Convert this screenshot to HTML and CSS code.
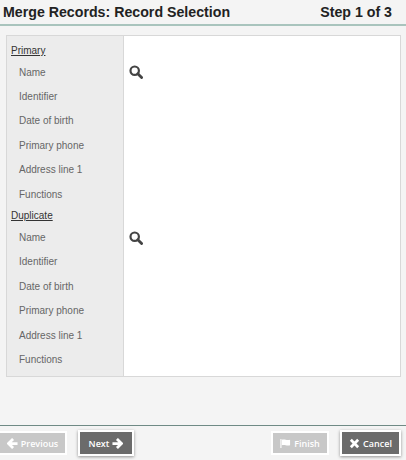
FILE: index.html
```html
<!DOCTYPE html>
<html lang="en">
<head>
  <meta charset="UTF-8" />
  <title>Merge Records</title>
  <link rel="stylesheet" href="styles.css">
</head>
<body>
  <div class="header">
    <h1>Merge Records: Record Selection</h1>
    <div class="step">Step 1 of 3</div>
  </div>

  <div class="panel">
    <div class="labels">
      <div class="group">Primary</div>
      <div class="row">Name</div>
      <div class="row">Identifier</div>
      <div class="row">Date of birth</div>
      <div class="row">Primary phone</div>
      <div class="row">Address line 1</div>
      <div class="row">Functions</div>
      <div class="group second">Duplicate</div>
      <div class="row">Name</div>
      <div class="row">Identifier</div>
      <div class="row">Date of birth</div>
      <div class="row">Primary phone</div>
      <div class="row">Address line 1</div>
      <div class="row">Functions</div>
    </div>
    <div class="values">
      <div class="group"></div>
      <div class="row">
        <svg class="search" viewBox="0 0 14 14"><circle cx="5.7" cy="5.7" r="4.2" fill="none" stroke="#444" stroke-width="2.2"/><path d="M8.8 8.8l3.8 3.8" stroke="#444" stroke-width="2.8" stroke-linecap="round"/></svg>
      </div>
      <div class="row"></div>
      <div class="row"></div>
      <div class="row"></div>
      <div class="row"></div>
      <div class="row"></div>
      <div class="group second"></div>
      <div class="row">
        <svg class="search" viewBox="0 0 14 14"><circle cx="5.7" cy="5.7" r="4.2" fill="none" stroke="#444" stroke-width="2.2"/><path d="M8.8 8.8l3.8 3.8" stroke="#444" stroke-width="2.8" stroke-linecap="round"/></svg>
      </div>
    </div>
  </div>

  <div class="footer">
    <div class="btn-group">
      <button class="btn disabled previous">
        <svg class="icon" viewBox="0 0 12 12"><path d="M6.600 1L1.600 6l5 5M2 6h9.500" fill="none" stroke="#fff" stroke-width="3"/></svg>
        Previous
      </button>
      <button class="btn next">
        Next
        <svg class="icon" viewBox="0 0 12 12"><path d="M5.400 1l5 5-5 5M10 6H.5" fill="none" stroke="#fff" stroke-width="3"/></svg>
      </button>
    </div>
    <div class="btn-group">
      <button class="btn disabled finish">
        <svg class="icon" viewBox="0 0 12 12"><path d="M1 1v10" stroke="#fff" stroke-width="1.2"/><path d="M2 2c3-1.2 5 1 9 0v6c-4 1-6-1.200-9 0z" fill="#fff"/></svg>
        Finish
      </button>
      <button class="btn cancel">
        <svg class="icon" viewBox="0 0 12 12"><path d="M2 2l8 8M10 2l-8 8" stroke="#fff" stroke-width="3"/></svg>
        Cancel
      </button>
    </div>
  </div>
</body>
</html>
```

FILE: styles.css
```css
* {
  box-sizing: border-box;
}
html, body {
  height: 100%;
}
body {
  margin: 0;
  background: #f4f4f4;
  color: #333;
  font-family: "Liberation Sans", Arial, sans-serif;
  font-size: 10px;
  display: flex;
  flex-direction: column;
  overflow: hidden;
}
.header {
  height: 26px;
  padding: 0 14px 0 3px;
  display: flex;
  justify-content: space-between;
  align-items: center;
  border-bottom: 2px solid #a9c4bd;
  color: #222;
  font-size: 14.2px;
  font-weight: bold;
}
h1 {
  margin: 0;
  font-size: 14.2px;
}
.panel {
  margin: 9px 5px 0 6px;
  height: 342px;
  display: flex;
  background: #fff;
  border: 1px solid #d8d8d8;
}
.labels {
  width: 117px;
  background: #ececec;
  border-right: 1px solid #d8d8d8;
  color: #666;
}
.values {
  flex: 1;
}
.group {
  height: 13px;
  margin: 8px 0 3px;
  padding-left: 4px;
  line-height: 13px;
  color: #333;
  text-decoration: underline;
}
.group.second {
  margin: 3px 0 3px;
}
.row {
  height: 24.4px;
  padding-left: 12px;
  display: flex;
  align-items: center;
}
.values .row {
  padding-left: 5px;
}
.search {
  width: 14px;
  height: 14px;
}
.footer {
  margin-top: auto;
  height: 35px;
  padding: 4px 5px 4px 0;
  display: flex;
  justify-content: space-between;
  border-top: 1px solid #6f8a85;
}
.btn-group {
  display: flex;
  align-items: center;
  gap: 11px;
}
.btn {
  height: 26px;
  padding: 0;
  display: flex;
  align-items: center;
  justify-content: center;
  gap: 3px;
  background: #6b6b6b;
  border: 2px solid #fff;
  color: #fff;
  font-family: "Open Sans", sans-serif;
  font-size: 9px;
  font-weight: 600;
  box-shadow: 0 1px 3px rgba(0,0,0,0.4);
}
.btn.disabled {
  height: 24px;
  background: #c8c8c8;
  box-shadow: none;
}
.icon {
  width: 11px;
  height: 11px;
}
.previous {
  width: 69px;
  margin-left: -2px;
}
.next {
  width: 56px;
}
.finish {
  width: 58px;
}
.cancel {
  width: 61px;
}
```
